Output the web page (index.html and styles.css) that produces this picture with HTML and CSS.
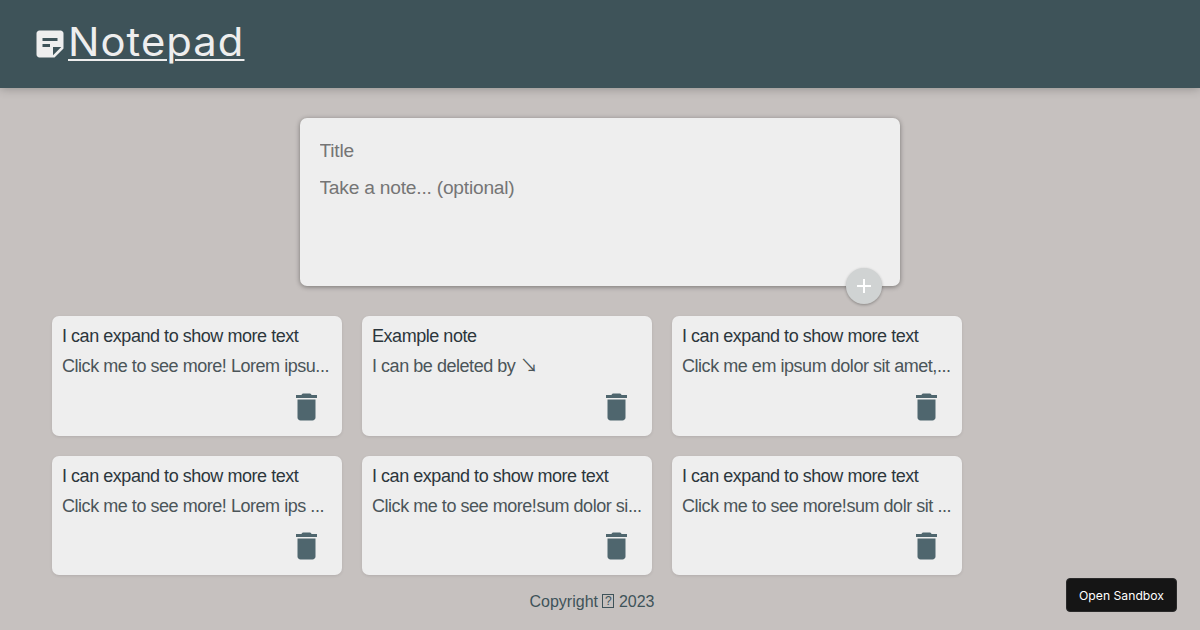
FILE: index.html
```html
<!DOCTYPE html>
<html lang="en">
<head>
<meta charset="utf-8">
<title>Notepad</title>
<link rel="stylesheet" href="styles.css">
</head>
<body>
<svg class="defs" width="0" height="0" aria-hidden="true">
  <symbol id="trash" viewBox="0 0 24 24"><path d="M6 19c0 1.1.9 2 2 2h8c1.1 0 2-.9 2-2V7H6v12zM19 4h-3.5l-1-1h-5l-1 1H5v2h14V4z"/></symbol>
</svg>
<header class="top">
  <svg class="logo" viewBox="0 0 24 24"><path d="M19 3H4.99C3.89 3 3 3.9 3 5l.01 14c0 1.1.89 2 1.99 2h10l6-6V5c0-1.1-.9-2-2-2zM7 8h10v2H7V8zm5 6H7v-2h5v2zm2 5.5V14h5.5L14 19.5z"/></svg>
  <a class="brand" href="#">Notepad</a>
</header>
<main>
  <form class="composer">
    <input class="field" type="text" placeholder="Title">
    <textarea class="field area" rows="3" placeholder="Take a note... (optional)"></textarea>
    <button class="add" type="button" aria-label="Add">
      <svg viewBox="0 0 24 24"><path d="M19 13h-6v6h-2v-6H5v-2h6V5h2v6h6v2z"/></svg>
    </button>
  </form>
  <section class="notes">
    <article class="note">
      <h2>I can expand to show more text</h2>
      <p>Click me to see more! Lorem ipsu...</p>
      <button class="del" type="button" aria-label="Delete"><svg><use href="#trash"/></svg></button>
    </article>
    <article class="note">
      <h2>Example note</h2>
      <p>I can be deleted by <span class="arrow">↘</span></p>
      <button class="del" type="button" aria-label="Delete"><svg><use href="#trash"/></svg></button>
    </article>
    <article class="note">
      <h2>I can expand to show more text</h2>
      <p>Click me em ipsum dolor sit amet,...</p>
      <button class="del" type="button" aria-label="Delete"><svg><use href="#trash"/></svg></button>
    </article>
    <article class="note">
      <h2>I can expand to show more text</h2>
      <p>Click me to see more! Lorem ips ...</p>
      <button class="del" type="button" aria-label="Delete"><svg><use href="#trash"/></svg></button>
    </article>
    <article class="note">
      <h2>I can expand to show more text</h2>
      <p>Click me to see more!sum dolor si...</p>
      <button class="del" type="button" aria-label="Delete"><svg><use href="#trash"/></svg></button>
    </article>
    <article class="note">
      <h2>I can expand to show more text</h2>
      <p>Click me to see more!sum dolr sit ...</p>
      <button class="del" type="button" aria-label="Delete"><svg><use href="#trash"/></svg></button>
    </article>
  </section>
  <footer class="foot">Copyright <span class="tofu">?</span> 2023</footer>
</main>
<a class="sandbox" href="#">Open Sandbox</a>
</body>
</html>
```
FILE: styles.css
```css
* { box-sizing: border-box; }
html, body { height: 100%; }
body {
  margin: 0;
  background: #c6c1bf;
  font-family: "Liberation Sans", Arial, sans-serif;
  overflow: hidden;
}
.defs { display: block; height: 0; }
.top {
  height: 88px;
  background: #3e5359;
  box-shadow: 0 0 10px rgba(0,0,0,.3);
  display: flex;
  align-items: center;
  padding: 0 0 0 32px;
  position: relative;
}
.logo { width: 36px; height: 36px; fill: #eeeeee; flex: none; }
.brand {
  font-family: "Inter", sans-serif;
  font-weight: 400;
  font-size: 39px;
  line-height: 50px;
  letter-spacing: 1px;
  color: #eeeeee;
  margin-top: -5px;
  text-decoration-thickness: 2px;
  text-underline-offset: 3px;
  transform: scaleX(1.07);
  transform-origin: left center;
}
main { display: block; }
.composer {
  position: relative;
  width: 600px;
  height: 168px;
  margin: 30px auto;
  padding: 20.5px 19.5px;
  background: #eeeeee;
  border-radius: 7px;
  box-shadow: 0 1px 5px rgba(0,0,0,.4);
}
.field {
  display: block;
  width: 100%;
  border: 0;
  outline: 0;
  padding: 0;
  background: transparent;
  font: 19.2px/24px "Liberation Sans", Arial, sans-serif;
  letter-spacing: -.22px;
  color: #333;
  resize: none;
}
.field::placeholder { color: #757575; opacity: 1; }
.area { margin-top: 13.5px; height: 72px; }
.add {
  position: absolute;
  right: 18px;
  bottom: -18px;
  width: 36px;
  height: 36px;
  border: 0;
  padding: 6px;
  border-radius: 50%;
  background: #d0d3d3;
  box-shadow: 0 1px 3px rgba(0,0,0,.3);
}
.add svg { display: block; width: 24px; height: 24px; fill: #fff; }
.notes {
  display: grid;
  grid-template-columns: repeat(3, 290px);
  grid-auto-rows: 119.5px;
  gap: 20px;
  padding-left: 52px;
}
.note {
  position: relative;
  background: #eeeeee;
  border-radius: 7px;
  padding: 10px;
  box-shadow: 0 1px 3px rgba(0,0,0,.1);
  min-width: 0;
}
.note h2 {
  margin: 0;
  font-size: 18px;
  line-height: 21px;
  font-weight: 400;
  letter-spacing: -.46px;
  color: #2c363c;
}
.note p {
  margin: 9px 0 0;
  font-size: 18px;
  line-height: 21px;
  letter-spacing: -.46px;
  color: #4b5559;
  white-space: nowrap;
}
.arrow { font-family: "Noto Sans CJK JP", sans-serif; line-height: 0; }
.del {
  position: absolute;
  right: 18px;
  bottom: 11px;
  width: 36px;
  height: 36px;
  padding: 0;
  border: 0;
  background: transparent;
}
.del svg { display: block; width: 36px; height: 36px; fill: #4f666e; transform: translateX(.5px); }
.foot {
  width: 1184px;
  margin-top: 17px;
  text-align: center;
  font-size: 16px;
  line-height: 20px;
  color: #3e5359;
}
.tofu {
  display: inline-block;
  overflow: hidden;
  width: 12px;
  height: 14px;
  border: 1px solid #3e5359;
  font-size: 12px;
  line-height: 12px;
  vertical-align: -1px;
  text-align: center;
}
.sandbox {
  position: fixed;
  left: 1066px;
  top: 578px;
  width: 111px;
  height: 34px;
  display: flex;
  align-items: center;
  justify-content: center;
  background: #151515;
  border: 1px solid #2a2a2a;
  border-radius: 4px;
  color: #fff;
  font: 12.2px "Inter", sans-serif;
  text-decoration: none;
}
```
